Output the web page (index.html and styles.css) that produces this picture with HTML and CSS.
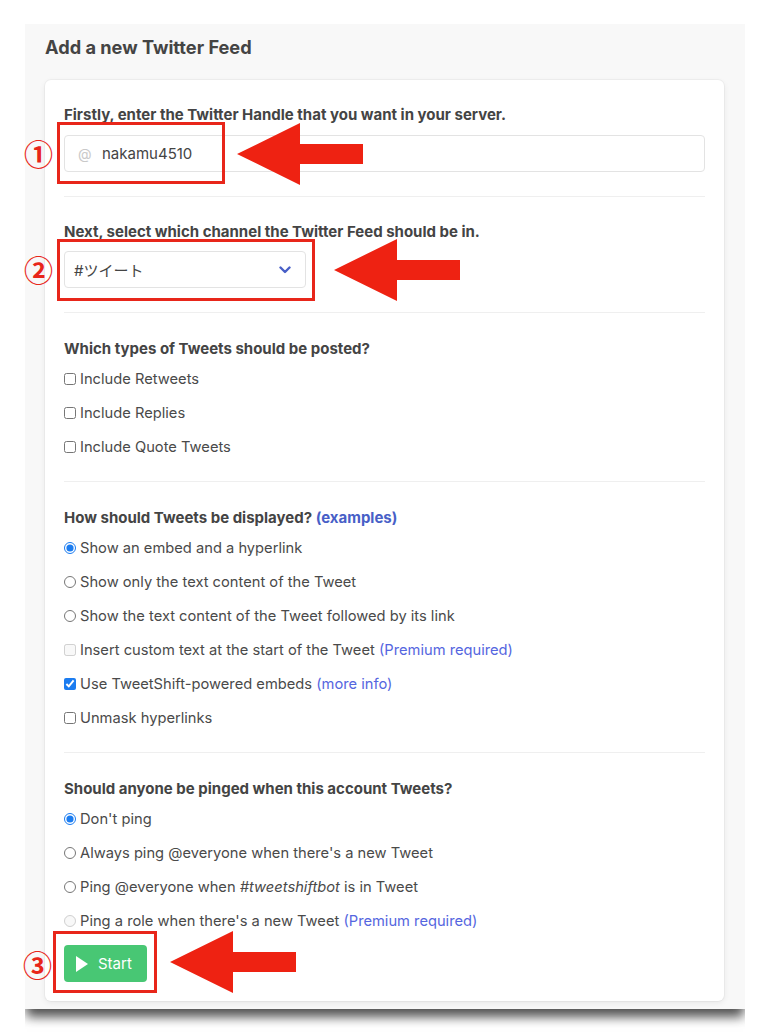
FILE: index.html
```html
<!DOCTYPE html>
<html lang="en">
<head>
  <meta charset="UTF-8">
  <meta name="viewport" content="width=device-width, initial-scale=1.0">
  <title>Add a new Twitter Feed</title>
  <link rel="stylesheet" href="styles.css">
</head>
<body>
<div class="panel">
  <h2 class="title">Add a new Twitter Feed</h2>
  <form class="card">
    <div class="section">
      <div class="label">Firstly, enter the Twitter Handle that you want in your server.</div>
      <div class="input">
        <span class="at">@</span>
        <span class="value">nakamu4510</span>
      </div>
    </div>
    <div class="section">
      <div class="label select-label">Next, select which channel the Twitter Feed should be in.</div>
      <div class="select">
        <span>#ツイート</span>
        <svg width="12" height="8" viewBox="0 0 12 8"><polyline points="1.5,1.5 6,6 10.5,1.5" fill="none" stroke="#485fc7" stroke-width="2.4" stroke-linecap="round" stroke-linejoin="round"/></svg>
      </div>
    </div>
    <div class="section">
      <div class="label">Which types of Tweets should be posted?</div>
      <label class="option"><input type="checkbox">Include Retweets</label>
      <label class="option"><input type="checkbox">Include Replies</label>
      <label class="option"><input type="checkbox">Include Quote Tweets</label>
    </div>
    <div class="section">
      <div class="label">How should Tweets be displayed? <a href="#">(examples)</a></div>
      <label class="option"><input type="radio" name="display" checked>Show an embed and a hyperlink</label>
      <label class="option"><input type="radio" name="display">Show only the text content of the Tweet</label>
      <label class="option"><input type="radio" name="display">Show the text content of the Tweet followed by its link</label>
      <label class="option"><input type="checkbox" disabled>Insert custom text at the start of the Tweet <a href="#" class="premium">(Premium required)</a></label>
      <label class="option"><input type="checkbox" checked>Use TweetShift-powered embeds <a href="#" class="premium">(more info)</a></label>
      <label class="option"><input type="checkbox">Unmask hyperlinks</label>
    </div>
    <div class="section last">
      <div class="label">Should anyone be pinged when this account Tweets?</div>
      <label class="option"><input type="radio" name="ping" checked>Don't ping</label>
      <label class="option"><input type="radio" name="ping">Always ping @everyone when there's a new Tweet</label>
      <label class="option"><input type="radio" name="ping">Ping @everyone when <em>#tweetshiftbot</em> is in Tweet</label>
      <label class="option"><input type="radio" name="ping" disabled>Ping a role when there's a new Tweet <a href="#" class="premium">(Premium required)</a></label>
      <button type="button" class="start">
        <svg width="12" height="16" viewBox="0 0 12 16"><polygon points="0,0 12,8 0,16" fill="#fff"/></svg>
        Start
      </button>
    </div>
  </form>
</div>

<!-- annotations -->
<div class="mark box1"></div>
<div class="mark box2"></div>
<div class="mark box3"></div>
<span class="num num1">①</span>
<span class="num num2">②</span>
<span class="num num3">③</span>
<svg class="arrow arrow1" width="126" height="63" viewBox="0 0 126 63"><polygon points="0,31 63,0 63,21 126,21 126,41 63,41 63,62"/></svg>
<svg class="arrow arrow2" width="126" height="63" viewBox="0 0 126 63"><polygon points="0,31 63,0 63,21 126,21 126,41 63,41 63,62"/></svg>
<svg class="arrow arrow3" width="126" height="63" viewBox="0 0 126 63"><polygon points="0,31 63,0 63,21 126,21 126,41 63,41 63,62"/></svg>
</body>
</html>
```

FILE: styles.css
```css
html {
  background: #fff;
}
body {
  margin: 24px 23px 0 25px;
  padding-bottom: 30px;
  font-family: Inter, "Noto Sans CJK JP", sans-serif;
  color: #4a4a4a;
}
.panel {
  position: relative;
  background: #f8f8f8;
  padding: 11px 21px 8px 20px;
  box-shadow: 0 10px 10px -2px rgba(0, 0, 0, 0.6), 0 0 16px 1px rgba(0, 0, 0, 0.3);
}
.title {
  margin: 0 0 21px;
  font-size: 18.2px;
  line-height: 24px;
  font-weight: 700;
  color: #444;
}
.card {
  background: #fff;
  border-radius: 6px;
  padding: 0 19px 19px;
  box-shadow: 0 2px 6px rgba(10, 10, 10, 0.07), 0 0 0 1px rgba(10, 10, 10, 0.03);
}
.section {
  padding: 26px 0 17px;
  border-bottom: 1px solid #efefef;
}
.section:first-child,
.section:nth-child(2) {
  padding-top: 25px;
  padding-bottom: 24px;
}
.section.last {
  border-bottom: none;
  padding-bottom: 0;
}
.label {
  font-size: 15px;
  font-weight: 700;
  line-height: 20px;
  color: #444;
  margin-bottom: 3px;
}
.section:first-child .label {
  margin-bottom: 10px;
}
.select-label {
  margin-bottom: 9px;
}
.label a {
  color: #485fc7;
  text-decoration: none;
}
.input {
  height: 37px;
  box-sizing: border-box;
  border: 1px solid #e3e3e3;
  border-radius: 4px;
  display: flex;
  align-items: center;
  padding-left: 13px;
  font-size: 15px;
}
.at {
  color: #c9c9c9;
  font-size: 14px;
  width: 24px;
}
.value {
  color: #444;
}
.select {
  width: 242px;
  height: 37px;
  box-sizing: border-box;
  border: 1px solid #e3e3e3;
  border-radius: 4px;
  display: flex;
  align-items: center;
  justify-content: space-between;
  padding: 0 14px 0 9px;
  font-size: 15px;
  color: #444;
}
.option {
  display: flex;
  align-items: center;
  height: 34px;
  font-size: 14.7px;
  color: #4a4a4a;
  white-space: pre;
}
.option input {
  width: 12px;
  height: 12px;
  margin: 0 4px 0 0;
  accent-color: #1b7cf0;
}
.option em {
  font-style: italic;
}
.premium {
  color: #5566e0;
  text-decoration: none;
}
.start {
  margin-top: 7px;
  width: 83px;
  height: 37px;
  border: none;
  border-radius: 4px;
  background: #48c774;
  color: #fff;
  font-family: Inter, sans-serif;
  font-size: 15px;
  display: flex;
  align-items: center;
  gap: 10px;
  padding: 0 0 0 12px;
}

/* annotations over the screenshot */
.mark {
  position: absolute;
  border: 3px solid #e8261a;
  box-sizing: border-box;
}
.box1 { left: 57px; top: 122px; width: 168px; height: 62px; }
.box2 { left: 57px; top: 239px; width: 258px; height: 62px; }
.box3 { left: 53px; top: 931px; width: 104px; height: 62px; }
.num {
  position: absolute;
  color: #e8261a;
  font-family: "Noto Sans CJK JP", sans-serif;
  font-weight: 700;
  font-size: 29px;
  line-height: 30px;
}
.num1 { left: 24px; top: 138px; }
.num2 { left: 24px; top: 254px; }
.num3 { left: 23px; top: 949px; }
.arrow {
  position: absolute;
  fill: #ee2212;
}
.arrow1 { left: 237px; top: 123px; }
.arrow2 { left: 334px; top: 239px; }
.arrow3 { left: 170px; top: 931px; }
```
